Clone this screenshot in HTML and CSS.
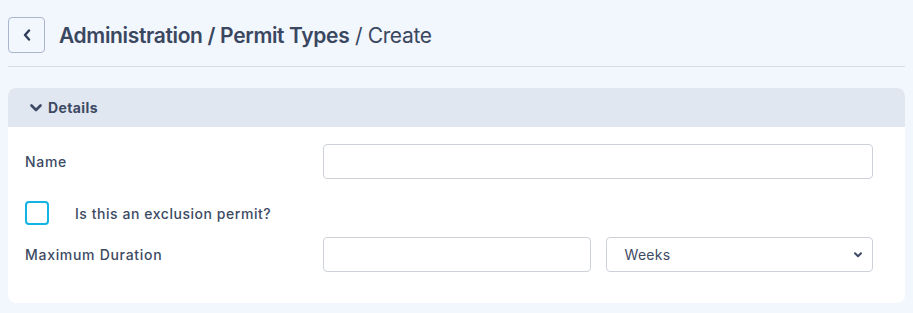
FILE: index.html
```html
<!DOCTYPE html>
<html lang="en">
<head>
<meta charset="utf-8">
<title>Permit Types / Create</title>
<link rel="stylesheet" href="styles.css">
</head>
<body>
<header class="page-header">
  <button class="back-btn" type="button" aria-label="Back">
    <svg width="8" height="12" viewBox="0 0 8 12"><path d="M6 1.5 L2 6 L6 10.5" fill="none" stroke="#2f3e5a" stroke-width="2.4" stroke-linecap="round" stroke-linejoin="round"/></svg>
  </button>
  <h1 class="title"><span class="crumb">Administration / Permit Types</span><span class="current"> / Create</span></h1>
</header>
<section class="card">
  <div class="card-head">
    <svg class="chev" width="12" height="8" viewBox="0 0 12 8"><path d="M1.5 1.5 L6 6 L10.5 1.5" fill="none" stroke="#3d4a63" stroke-width="2.6" stroke-linecap="round" stroke-linejoin="round"/></svg>
    <span>Details</span>
  </div>
  <div class="card-body">
    <div class="row row-name">
      <label class="label">Name</label>
      <input class="field" type="text">
    </div>
    <div class="row-check">
      <span class="checkbox"></span>
      <span class="check-label">Is this an exclusion permit?</span>
    </div>
    <div class="row row-duration">
      <label class="label">Maximum Duration</label>
      <div class="pair">
        <input class="field" type="text">
        <div class="select">
          <span>Weeks</span>
          <svg width="8" height="6" viewBox="0 0 8 6"><path d="M1 1.2 L4 4.2 L7 1.2" fill="none" stroke="#3d4a63" stroke-width="2" stroke-linecap="round" stroke-linejoin="round"/></svg>
        </div>
      </div>
    </div>
  </div>
</section>
</body>
</html>
```
FILE: styles.css
```css
* { box-sizing: border-box; }
html, body { background: #f2f6fd; }
body {
  margin: 8px;
  font-family: Inter, "Noto Sans", sans-serif;
  color: #3d4a63;
}
.page-header {
  display: flex;
  align-items: center;
  gap: 14px;
  padding-top: 9px;
  padding-bottom: 13px;
  border-bottom: 1px solid #d9dde4;
}
.back-btn {
  width: 37px;
  height: 36px;
  border: 1px solid #a9b7cd;
  border-radius: 4px;
  background: #f2f6fd;
  display: flex;
  align-items: center;
  justify-content: center;
  padding: 0;
}
.title {
  margin: 0;
  font-size: 21px;
  font-weight: 600;
  color: #3a4760;
  letter-spacing: -0.35px;
}
.title .current { font-weight: 400; }
.card {
  margin-top: 21px;
  background: #ffffff;
  border-radius: 8px;
  overflow: hidden;
  padding-bottom: 31px;
}
.card-head {
  height: 39px;
  background: #e1e7f1;
  display: flex;
  align-items: center;
  padding-left: 22px;
  gap: 6px;
  font-size: 14px;
  font-weight: 700;
  letter-spacing: 0.4px;
  color: #3d4a63;
}
.card-body {
  padding: 17px 32px 0 17px;
}
.row {
  display: grid;
  grid-template-columns: 298px 1fr;
  align-items: center;
}
.label {
  font-size: 14px;
  font-weight: 500;
  letter-spacing: 0.7px;
  color: #3d4a63;
}
.field {
  height: 35px;
  width: 100%;
  border: 1px solid #cdd1d8;
  border-radius: 4px;
  background: #fff;
  font: inherit;
}
.row-check {
  display: flex;
  align-items: center;
  margin-top: 22px;
  height: 24px;
}
.checkbox {
  width: 24px;
  height: 24px;
  border: 2px solid #13b4e3;
  border-radius: 4px;
  margin-right: 26px;
}
.check-label {
  font-size: 14px;
  font-weight: 500;
  letter-spacing: 0.55px;
  color: #3d4a63;
}
.row-duration { margin-top: 12px; }
.pair {
  display: grid;
  grid-template-columns: 1fr 1fr;
  gap: 15px;
}
.select {
  height: 35px;
  border: 1px solid #cdd1d8;
  border-radius: 4px;
  display: flex;
  align-items: center;
  justify-content: space-between;
  padding: 0 10px 0 18px;
  font-size: 14px;
  letter-spacing: 0.3px;
  color: #3d4a63;
}
```
